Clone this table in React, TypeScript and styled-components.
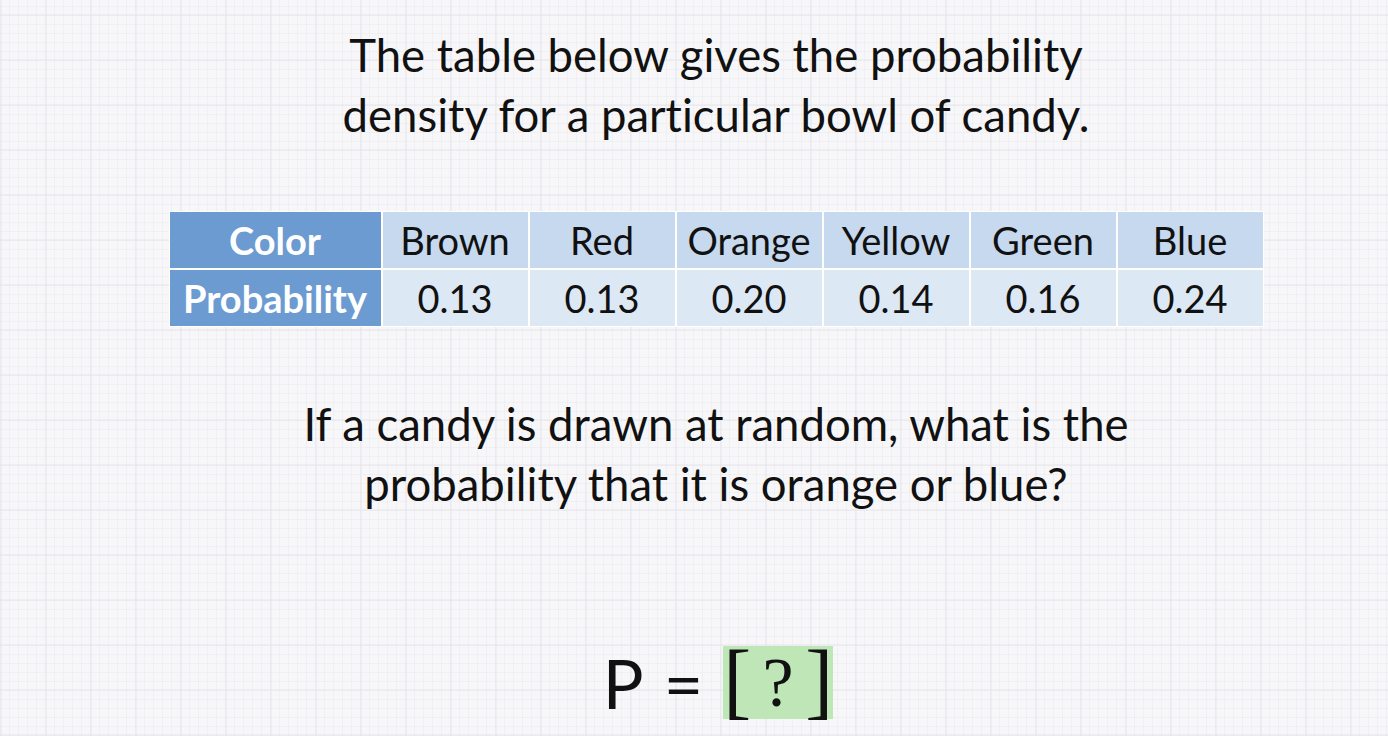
import React from 'react'
import styled, { createGlobalStyle } from 'styled-components'

//--------------------------------------
// data
//--------------------------------------
const candies = [
  { color: 'Brown', p: '0.13' },
  { color: 'Red', p: '0.13' },
  { color: 'Orange', p: '0.20' },
  { color: 'Yellow', p: '0.14' },
  { color: 'Green', p: '0.16' },
  { color: 'Blue', p: '0.24' },
]

//--------------------------------------
// style
//--------------------------------------
const GlobalStyle = createGlobalStyle`
  html, body {
    margin: 0;
    padding: 0;
  }
  body {
    width: 1388px;
    height: 736px;
    overflow: hidden;
    background-color: #f7f7f9;
    background-image:
      repeating-linear-gradient(90deg, rgba(228, 228, 234, 0.35) 0 1px, transparent 1px 9px),
      repeating-linear-gradient(0deg, rgba(228, 228, 234, 0.35) 0 1px, transparent 1px 9px),
      repeating-linear-gradient(90deg, rgba(220, 220, 228, 0.3) 0 2px, transparent 2px 45px),
      repeating-linear-gradient(0deg, rgba(220, 220, 228, 0.3) 0 2px, transparent 2px 45px);
  }
`

const Slide = styled.main`
  box-sizing: border-box;
  width: 1388px;
  height: 736px;
  padding: 25px 0 0 44px;
  display: flex;
  flex-direction: column;
  align-items: center;
  font-family: 'Lato', 'Noto Sans', sans-serif;
  font-variant-ligatures: none;
  color: #111;
`

const Prompt = styled.p<{ $top: number }>`
  margin: ${(p) => p.$top}px 0 0;
  font-size: 45.5px;
  line-height: 60px;
  text-align: center;
  white-space: nowrap;
`

const Table = styled.div`
  margin-top: 66px;
  display: grid;
  grid-template-columns: 211px repeat(6, 145px);
  grid-auto-rows: 56px;
  gap: 2px;
  background: #fff;
  border: 1px solid #fff;
  font-family: 'Lato', 'Open Sans', sans-serif;
  font-size: 38px;
`

const Cell = styled.div<{ $tone: 'head' | 'top' | 'bottom' }>`
  display: flex;
  align-items: center;
  justify-content: center;
  background: ${(p) => (p.$tone === 'head' ? '#6b9bd1' : p.$tone === 'top' ? '#c6d9ef' : '#dde8f5')};
  color: ${(p) => (p.$tone === 'head' ? '#fff' : '#111')};
  font-weight: ${(p) => (p.$tone === 'head' ? 700 : 400)};
`

const Equation = styled.div`
  margin-top: 132px;
  display: flex;
  align-items: center;
  gap: 20px;
  padding-left: 4px;
`

const Symbol = styled.span`
  font-family: 'Lato', 'Noto Sans', sans-serif;
  font-size: 68px;
  line-height: 1;
  color: #111;
`

const AnswerBox = styled.div`
  width: 110px;
  height: 73px;
  display: flex;
  align-items: center;
  justify-content: space-between;
  background: #bfe6b6;
  font-family: 'Liberation Serif', 'DejaVu Serif', serif;
  color: #111;
`

const Bracket = styled.span`
  font-size: 84px;
  line-height: 1;
  margin-top: -4px;
`

const Question = styled.span`
  font-size: 70px;
  line-height: 1;
`

//----------------------------------
// component
//----------------------------------
const App = () => {
  return (
    <>
      <GlobalStyle />
      <Slide>
        {/** @section Title */}
        <Prompt $top={0}>
          The table below gives the probability
          <br />
          density for a particular bowl of candy.
        </Prompt>

        {/** @section Table */}
        <Table>
          <Cell $tone="head">Color</Cell>
          {candies.map((c) => (
            <Cell key={c.color} $tone="top">
              {c.color}
            </Cell>
          ))}
          <Cell $tone="head">Probability</Cell>
          {candies.map((c) => (
            <Cell key={c.color + '-p'} $tone="bottom">
              {c.p}
            </Cell>
          ))}
        </Table>

        {/** @section Question */}
        <Prompt $top={67}>
          If a candy is drawn at random, what is the
          <br />
          probability that it is orange or blue?
        </Prompt>

        {/** @section Answer */}
        <Equation>
          <Symbol>P</Symbol>
          <Symbol>=</Symbol>
          <AnswerBox>
            <Bracket>[</Bracket>
            <Question>?</Question>
            <Bracket>]</Bracket>
          </AnswerBox>
        </Equation>
      </Slide>
    </>
  )
}

export default App
